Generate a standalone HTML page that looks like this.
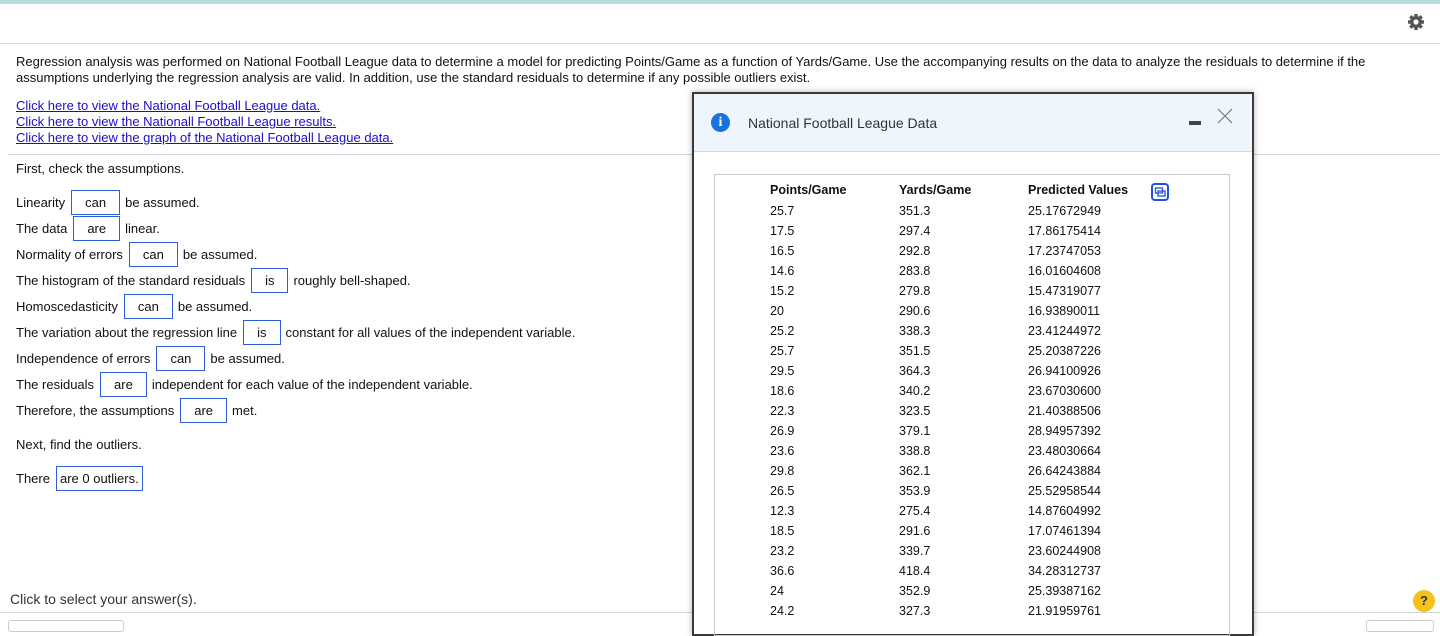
<!DOCTYPE html>
<html><head><style>
body{margin:0;width:1440px;height:623px;overflow:hidden;background:#fff;font-family:"Liberation Sans",Arial,sans-serif;font-size:13px;color:#111;position:relative}
.a{position:absolute;white-space:nowrap}
.l{position:absolute;left:16px;height:25px;line-height:25px;white-space:nowrap}
.b{display:inline-block;border:1px solid #2f5fd8;height:23px;line-height:23px;padding:0 13px;margin:0 5px 0 6px;vertical-align:top}
a{color:#1a0dcc;text-decoration:underline}
.row{position:absolute;left:770px;white-space:nowrap;font-size:12.5px}
.row span{position:absolute}
</style></head><body>
<div class="a" style="left:0;top:0;width:1440px;height:4px;background:#b3dcd8"></div>
<svg class="a" style="left:1407px;top:13px" width="18" height="18" viewBox="0 0 18 18"><g fill="#555"><circle cx="9" cy="9" r="6"/><rect x="7.3" y="1" width="3.4" height="16"/><rect x="1" y="7.3" width="16" height="3.4"/><rect x="7.3" y="1" width="3.4" height="16" transform="rotate(45 9 9)"/><rect x="7.3" y="1" width="3.4" height="16" transform="rotate(-45 9 9)"/></g><circle cx="9" cy="9" r="2.6" fill="#fff"/></svg>
<div class="a" style="left:0;top:43px;width:1440px;height:1px;background:#cfd3da"></div>
<div class="a" style="left:16px;top:54px;line-height:16px">Regression analysis was performed on National Football League data to determine a model for predicting Points/Game as a function of Yards/Game. Use the accompanying results on the data to analyze the residuals to determine if the<br>assumptions underlying the regression analysis are valid. In addition, use the standard residuals to determine if any possible outliers exist.</div>
<div class="a" style="left:16px;top:98px;line-height:16px"><a>Click here to view the National Football League data.</a><br><a>Click here to view the Nationall Football League results.</a><br><a>Click here to view the graph of the National Football League data.</a></div>
<div class="a" style="left:8px;top:154px;width:1432px;height:1px;background:#cfd3da"></div>
<div class="a" style="left:16px;top:161px">First, check the assumptions.</div>
<div class="l" style="top:190px">Linearity<span class="b">can</span>be assumed.</div>
<div class="l" style="top:216px">The data<span class="b">are</span>linear.</div>
<div class="l" style="top:242px">Normality of errors<span class="b">can</span>be assumed.</div>
<div class="l" style="top:268px">The histogram of the standard residuals<span class="b">is</span>roughly bell-shaped.</div>
<div class="l" style="top:294px">Homoscedasticity<span class="b">can</span>be assumed.</div>
<div class="l" style="top:320px">The variation about the regression line<span class="b">is</span>constant for all values of the independent variable.</div>
<div class="l" style="top:346px">Independence of errors<span class="b">can</span>be assumed.</div>
<div class="l" style="top:372px">The residuals<span class="b">are</span>independent for each value of the independent variable.</div>
<div class="l" style="top:398px">Therefore, the assumptions<span class="b">are</span>met.</div>
<div class="a" style="left:16px;top:437px">Next, find the outliers.</div>
<div class="l" style="top:466px">There<span class="b" style="padding:0 3px">are 0 outliers.</span></div>
<div class="a" style="left:10px;top:591px;font-size:14px;color:#333">Click to select your answer(s).</div>
<div class="a" style="left:0;top:612px;width:1440px;height:1px;background:#cfd3da"></div>
<div class="a" style="left:1413px;top:590px;width:22px;height:22px;border-radius:50%;background:#f4c21a;text-align:center;line-height:22px;font-weight:bold;color:#333">?</div>
<div class="a" style="left:8px;top:620px;width:114px;height:10px;border:1px solid #ccc;border-radius:3px"></div>
<div class="a" style="left:1366px;top:620px;width:66px;height:10px;border:1px solid #ccc;border-radius:3px"></div>
<div class="a" style="left:692px;top:92px;width:558px;height:540px;border:2px solid #3a3a3a;background:#fff;box-shadow:0 0 6px rgba(0,0,0,.3)">
<div style="height:57px;background:#eef5fd;border-bottom:1px solid #bfe0f5;position:relative">
<div class="a" style="left:17px;top:19px;width:19px;height:19px;border-radius:50%;background:#1a73d9;color:#fff;font-weight:bold;font-family:'Liberation Serif',serif;font-size:14px;text-align:center;line-height:19px">i</div>
<div class="a" style="left:54px;top:21px;font-size:14px;color:#333">National Football League Data</div>
<div class="a" style="left:495px;top:27px;width:12px;height:4px;background:#444"></div>
<svg class="a" style="left:523px;top:14px" width="16" height="16"><path d="M1 1L15 15M15 1L1 15" stroke="#777" stroke-width="1.2"/></svg>
</div>
<div class="a" style="left:20px;top:80px;width:514px;height:460px;border:1px solid #c8c8c8"></div>
<svg class="a" style="left:457px;top:89px" width="18" height="18"><rect x="1" y="1" width="16" height="16" rx="3" fill="none" stroke="#2353d8" stroke-width="2"/><rect x="4.5" y="5" width="7" height="5" fill="none" stroke="#2353d8" stroke-width="1.3"/><rect x="7" y="8" width="7" height="5" fill="none" stroke="#2353d8" stroke-width="1.3"/></svg>
</div>
<div class="row" style="top:183px;font-weight:bold"><span style="left:0">Points/Game</span><span style="left:129px">Yards/Game</span><span style="left:258px">Predicted Values</span></div>
<div class="row" style="top:204px"><span style="left:0">25.7</span><span style="left:129px">351.3</span><span style="left:258px">25.17672949</span></div>
<div class="row" style="top:224px"><span style="left:0">17.5</span><span style="left:129px">297.4</span><span style="left:258px">17.86175414</span></div>
<div class="row" style="top:244px"><span style="left:0">16.5</span><span style="left:129px">292.8</span><span style="left:258px">17.23747053</span></div>
<div class="row" style="top:264px"><span style="left:0">14.6</span><span style="left:129px">283.8</span><span style="left:258px">16.01604608</span></div>
<div class="row" style="top:284px"><span style="left:0">15.2</span><span style="left:129px">279.8</span><span style="left:258px">15.47319077</span></div>
<div class="row" style="top:304px"><span style="left:0">20</span><span style="left:129px">290.6</span><span style="left:258px">16.93890011</span></div>
<div class="row" style="top:324px"><span style="left:0">25.2</span><span style="left:129px">338.3</span><span style="left:258px">23.41244972</span></div>
<div class="row" style="top:344px"><span style="left:0">25.7</span><span style="left:129px">351.5</span><span style="left:258px">25.20387226</span></div>
<div class="row" style="top:364px"><span style="left:0">29.5</span><span style="left:129px">364.3</span><span style="left:258px">26.94100926</span></div>
<div class="row" style="top:384px"><span style="left:0">18.6</span><span style="left:129px">340.2</span><span style="left:258px">23.67030600</span></div>
<div class="row" style="top:404px"><span style="left:0">22.3</span><span style="left:129px">323.5</span><span style="left:258px">21.40388506</span></div>
<div class="row" style="top:424px"><span style="left:0">26.9</span><span style="left:129px">379.1</span><span style="left:258px">28.94957392</span></div>
<div class="row" style="top:444px"><span style="left:0">23.6</span><span style="left:129px">338.8</span><span style="left:258px">23.48030664</span></div>
<div class="row" style="top:464px"><span style="left:0">29.8</span><span style="left:129px">362.1</span><span style="left:258px">26.64243884</span></div>
<div class="row" style="top:484px"><span style="left:0">26.5</span><span style="left:129px">353.9</span><span style="left:258px">25.52958544</span></div>
<div class="row" style="top:504px"><span style="left:0">12.3</span><span style="left:129px">275.4</span><span style="left:258px">14.87604992</span></div>
<div class="row" style="top:524px"><span style="left:0">18.5</span><span style="left:129px">291.6</span><span style="left:258px">17.07461394</span></div>
<div class="row" style="top:544px"><span style="left:0">23.2</span><span style="left:129px">339.7</span><span style="left:258px">23.60244908</span></div>
<div class="row" style="top:564px"><span style="left:0">36.6</span><span style="left:129px">418.4</span><span style="left:258px">34.28312737</span></div>
<div class="row" style="top:584px"><span style="left:0">24</span><span style="left:129px">352.9</span><span style="left:258px">25.39387162</span></div>
<div class="row" style="top:604px"><span style="left:0">24.2</span><span style="left:129px">327.3</span><span style="left:258px">21.91959761</span></div>
</body></html>
